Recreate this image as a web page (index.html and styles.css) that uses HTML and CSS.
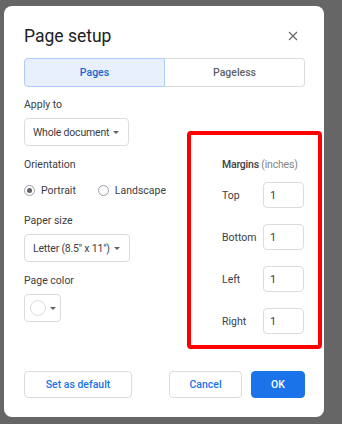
FILE: index.html
```html
<!DOCTYPE html>
<html>
<head>
    <title>Page setup</title>
    <meta name="viewport" content="width=device-width, initial-scale=1">
    <link rel="stylesheet" href="styles.css">
</head>
<body>
    <div class="dialog">
        <div class="header">
            <h1>Page setup</h1>
            <button class="close" aria-label="Close">
                <svg width="10" height="10" viewBox="0 0 10 10"><path d="M1 1L9 9M9 1L1 9" stroke="#5f6368" stroke-width="1.1" fill="none"/></svg>
            </button>
        </div>

        <div class="tabs">
            <button class="tab active">Pages</button>
            <button class="tab">Pageless</button>
        </div>

        <div class="content">
            <div class="left">
                <div class="field">
                    <div class="label">Apply to</div>
                    <div class="select">Whole document <span class="caret"></span></div>
                </div>
                <div class="field">
                    <div class="label">Orientation</div>
                    <div class="radios">
                        <label class="radio"><span class="dot checked"></span>Portrait</label>
                        <label class="radio"><span class="dot"></span>Landscape</label>
                    </div>
                </div>
                <div class="field">
                    <div class="label">Paper size</div>
                    <div class="select">Letter (8.5" x 11") <span class="caret"></span></div>
                </div>
                <div class="field">
                    <div class="label">Page color</div>
                    <div class="select color-btn"><span class="swatch"></span><span class="caret"></span></div>
                </div>
            </div>

            <div class="margins">
                <div class="margins-title">Margins <span class="unit">(inches)</span></div>
                <div class="margin-row"><span>Top</span><input type="text" value="1"></div>
                <div class="margin-row"><span>Bottom</span><input type="text" value="1"></div>
                <div class="margin-row"><span>Left</span><input type="text" value="1"></div>
                <div class="margin-row"><span>Right</span><input type="text" value="1"></div>
            </div>
        </div>

        <div class="footer">
            <button class="btn default">Set as default</button>
            <div class="actions">
                <button class="btn cancel">Cancel</button>
                <button class="btn primary">OK</button>
            </div>
        </div>
    </div>
</body>
</html>
```

FILE: styles.css
```css
body {
    margin: 0;
    background-color: #666666;
    font-family: Roboto, "Liberation Sans", sans-serif;
    color: #3c4043;
    width: 342px;
    height: 424px;
    overflow: hidden;
}
.dialog {
    box-sizing: border-box;
    width: 320px;
    height: 411px;
    margin: 6px 0 0 4px;
    padding: 18px 19px 0 20px;
    background-color: white;
    border-radius: 8px;
}
.header {
    display: flex;
    justify-content: space-between;
    align-items: center;
    height: 24px;
}
h1 {
    margin: 0;
    font-size: 17.5px;
    font-weight: 400;
    color: #202124;
}
.close {
    border: none;
    background: none;
    padding: 0;
    width: 10px;
    height: 10px;
    margin-right: 7px;
    display: flex;
}
.tabs {
    display: flex;
    margin-top: 10px;
    height: 29px;
}
.tab {
    flex: 1;
    font-family: inherit;
    font-size: 10.5px;
    font-weight: 500;
    color: #5f6368;
    background: white;
    border: 1px solid #dadce0;
    border-left: none;
    border-radius: 0 4px 4px 0;
}
.tab.active {
    background-color: #e8f0fe;
    color: #1967d2;
    border: 1px solid #aecbfa;
    border-radius: 4px 0 0 4px;
}
.content {
    display: flex;
    justify-content: space-between;
    align-items: flex-start;
    margin-top: 11px;
    margin-right: -17px;
}
.left {
    width: 163px;
}
.field {
    margin-bottom: 12px;
}
.label {
    font-size: 10.5px;
    line-height: 14px;
    margin-bottom: 6px;
    color: #3c4043;
}
.select {
    box-sizing: border-box;
    display: inline-flex;
    align-items: center;
    height: 28px;
    padding: 0 9px 0 8px;
    border: 1px solid #dadce0;
    border-radius: 4px;
    font-size: 10.5px;
    letter-spacing: -0.2px;
    color: #3c4043;
}
.caret {
    width: 0;
    height: 0;
    margin-left: 4px;
    border-left: 3px solid transparent;
    border-right: 3px solid transparent;
    border-top: 3px solid #5f6368;
}
.color-btn {
    width: 37px;
    padding: 0 0 0 5px;
}
.swatch {
    box-sizing: border-box;
    width: 16px;
    height: 16px;
    border: 1px solid #dadce0;
    border-radius: 50%;
}
.color-btn .caret {
    margin-left: 4px;
}
.radios {
    display: flex;
    height: 24px;
    align-items: center;
}
.radio {
    display: flex;
    align-items: center;
    font-size: 10.5px;
    margin-right: 22px;
}
.dot {
    box-sizing: border-box;
    width: 11px;
    height: 11px;
    border: 1px solid #9aa0a6;
    border-radius: 50%;
    margin-right: 6px;
    display: flex;
    align-items: center;
    justify-content: center;
}
.dot.checked::after {
    content: "";
    width: 5px;
    height: 5px;
    border-radius: 50%;
    background-color: #5f6368;
}
.margins {
    box-sizing: border-box;
    width: 135px;
    margin-top: 33px;
    padding: 23px 14px 11px 31px;
    border: 4px solid #ff0000;
    border-radius: 4px;
}
.margins-title {
    font-size: 10.5px;
    line-height: 14px;
    font-weight: 500;
    letter-spacing: -0.2px;
    white-space: nowrap;
    color: #3c4043;
    margin-bottom: 10px;
}
.unit {
    font-weight: 400;
    color: #80868b;
}
.margin-row {
    display: flex;
    align-items: center;
    justify-content: space-between;
    font-size: 10.5px;
    margin-bottom: 16px;
}
.margin-row:last-child {
    margin-bottom: 0;
}
.margin-row input {
    box-sizing: border-box;
    width: 41px;
    height: 26px;
    padding: 0 6px;
    border: 1px solid #dadce0;
    border-radius: 4px;
    font-family: inherit;
    font-size: 11px;
    color: #3c4043;
}
.footer {
    display: flex;
    justify-content: space-between;
    margin-top: 22px;
}
.actions {
    display: flex;
    gap: 9px;
}
.btn {
    height: 27px;
    font-family: inherit;
    font-size: 10.5px;
    font-weight: 500;
    color: #1a73e8;
    background: white;
    border: 1px solid #dadce0;
    border-radius: 4px;
}
.default {
    width: 108px;
}
.cancel {
    width: 73px;
}
.primary {
    width: 54px;
    background-color: #1a73e8;
    border-color: #1a73e8;
    color: white;
}
```
